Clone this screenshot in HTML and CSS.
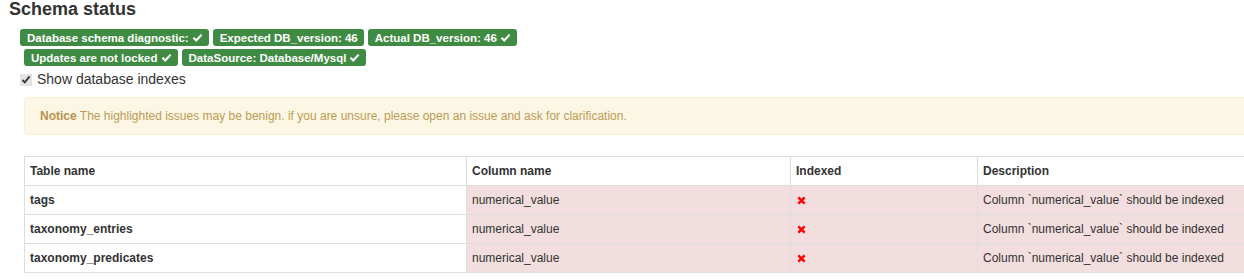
FILE: index.html
```html
<!DOCTYPE html>
<html lang="en">
<head>
  <meta charset="UTF-8" />
  <title>Schema status</title>
  <link rel="stylesheet" href="styles.css">
</head>
<body>
  <h3 class="title">Schema status</h3>

  <div class="label-row">
    <span class="label">Database schema diagnostic: <svg class="ok" viewBox="0 0 12 10"><path d="M1.5 5.2 4.6 8.2 10.6 1.8"/></svg></span>
    <span class="label">Expected DB_version: 46</span>
    <span class="label">Actual DB_version: 46 <svg class="ok" viewBox="0 0 12 10"><path d="M1.5 5.2 4.6 8.2 10.6 1.8"/></svg></span>
  </div>
  <div class="label-row second">
    <span class="label">Updates are not locked <svg class="ok" viewBox="0 0 12 10"><path d="M1.5 5.2 4.6 8.2 10.6 1.8"/></svg></span>
    <span class="label">DataSource: Database/Mysql <svg class="ok" viewBox="0 0 12 10"><path d="M1.5 5.2 4.6 8.2 10.6 1.8"/></svg></span>
  </div>

  <label class="check">
    <input type="checkbox" checked />
    <span>Show database indexes</span>
  </label>

  <div class="content">
    <div class="alert"><b>Notice</b> The highlighted issues may be benign. if you are unsure, please open an issue and ask for clarification.</div>

    <table class="indexes">
      <tr>
        <th class="c-table">Table name</th>
        <th class="c-column">Column name</th>
        <th class="c-indexed">Indexed</th>
        <th>Description</th>
      </tr>
      <tr class="danger">
        <th>tags</th>
        <td>numerical_value</td>
        <td><svg class="no" viewBox="0 0 10 10"><path d="M1.5 1.5 8.5 8.5M8.5 1.5 1.5 8.5"/></svg></td>
        <td>Column `numerical_value` should be indexed</td>
      </tr>
      <tr class="danger">
        <th>taxonomy_entries</th>
        <td>numerical_value</td>
        <td><svg class="no" viewBox="0 0 10 10"><path d="M1.5 1.5 8.5 8.5M8.5 1.5 1.5 8.5"/></svg></td>
        <td>Column `numerical_value` should be indexed</td>
      </tr>
      <tr class="danger">
        <th>taxonomy_predicates</th>
        <td>numerical_value</td>
        <td><svg class="no" viewBox="0 0 10 10"><path d="M1.5 1.5 8.5 8.5M8.5 1.5 1.5 8.5"/></svg></td>
        <td>Column `numerical_value` should be indexed</td>
      </tr>
    </table>
  </div>
</body>
</html>
```

FILE: styles.css
```css
html, body {
  overflow: hidden;
}
body {
  margin: 0;
  font-family: "Liberation Sans", Arial, sans-serif;
  color: #333;
  background: #fff;
}
.title {
  margin: 0 0 0 9px;
  font-size: 18px;
  line-height: 18px;
  font-weight: bold;
}
.label-row {
  display: flex;
  gap: 4px;
  padding-left: 20px;
  margin-top: 11px;
}
.label-row.second {
  padding-left: 24px;
  margin-top: 3px;
}
.label {
  display: inline-flex;
  align-items: center;
  gap: 3px;
  height: 17px;
  padding: 0 6px 0 7px;
  font-size: 11.5px;
  font-weight: bold;
  color: #fff;
  background: #3f8b43;
  border-radius: 3px;
  white-space: nowrap;
}
.ok {
  width: 11px;
  height: 9px;
  fill: none;
  stroke: #fff;
  stroke-width: 2.4;
}
.check {
  display: flex;
  align-items: center;
  gap: 5px;
  margin: 4px 0 0 20px;
  font-size: 14px;
  line-height: 18px;
}
.check input {
  margin: 2px 0 0 0;
  width: 12px;
  height: 12px;
  accent-color: #e4e4e4;
}
.content {
  margin: 0 -60px 0 24px;
}
.alert {
  margin-top: 9px;
  padding: 11px 15px;
  font-size: 12px;
  line-height: 14px;
  color: #c09a56;
  background: #fcf7e4;
  border: 1px solid #faefd2;
  border-radius: 4px;
}
.alert b {
  color: #b8914d;
}
.indexes {
  margin-top: 21px;
  width: 100%;
  border-collapse: collapse;
  font-size: 12px;
  line-height: 14px;
}
.indexes th, .indexes td {
  border: 1px solid #ddd;
  padding: 7px 5px 7px 5px;
  text-align: left;
  vertical-align: middle;
}
.indexes th {
  font-weight: bold;
  color: #333;
}
.c-table {
  width: 431px;
}
.c-column {
  width: 313px;
}
.c-indexed {
  width: 176px;
}
.danger td {
  background: #f2dede;
}
.no {
  display: block;
  width: 9px;
  height: 9px;
  margin-left: 1px;
  fill: none;
  stroke: #f00;
  stroke-width: 2.8;
}
```
